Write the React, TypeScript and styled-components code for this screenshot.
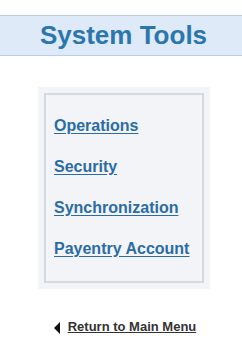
import React from "react";
import styled, { createGlobalStyle } from "styled-components";

const Global = createGlobalStyle`
  html, body { margin: 0; padding: 0; background: #ffffff; }
  body { font-family: "Liberation Sans", Arial, sans-serif; }
`;

const Page = styled.div`
  width: 242px;
  padding-top: 15px;
  display: flex;
  flex-direction: column;
  align-items: center;
`;

const Header = styled.h1`
  margin: 0;
  width: 100%;
  box-sizing: border-box;
  height: 41px;
  padding-left: 5px;
  border-top: 1px solid #b9cee5;
  border-bottom: 1px solid #b9cee5;
  background: #deeaf8;
  color: #2a76ad;
  font-size: 26px;
  font-weight: bold;
  line-height: 38px;
  text-align: center;
`;

const Panel = styled.div`
  margin-top: 31px;
  margin-left: 6px;
  width: 172px;
  box-sizing: border-box;
  padding: 6px;
  background: #f2f4f7;
`;

const Inner = styled.ul`
  list-style: none;
  margin: 0;
  box-sizing: border-box;
  border: 2px solid #d5d8dc;
  background: #f2f4f7;
  padding: 10px 0 12px 8px;
`;

const Item = styled.li`
  line-height: 41px;
  height: 41px;
`;

const MenuLink = styled.a`
  color: #2b6ca3;
  font-size: 16px;
  font-weight: bold;
  text-decoration: underline;
  text-underline-offset: 2px;
`;

const Back = styled.div`
  margin-top: 30px;
  margin-left: 8px;
  display: flex;
  align-items: center;
  gap: 8px;
  line-height: 16px;
`;

const Arrow = styled.span`
  width: 0;
  height: 0;
  border-top: 6px solid transparent;
  border-bottom: 6px solid transparent;
  border-right: 6px solid #111;
  margin-top: 1px;
`;

const BackLink = styled.a`
  color: #333;
  font-size: 13px;
  font-weight: bold;
  text-decoration: underline;
`;

const items = ["Operations", "Security", "Synchronization", "Payentry Account"];

export default function App() {
  return (
    <>
      <Global />
      <Page>
        <Header>System Tools</Header>
        <Panel>
          <Inner>
            {items.map((t) => (
              <Item key={t}>
                <MenuLink href="#">{t}</MenuLink>
              </Item>
            ))}
          </Inner>
        </Panel>
        <Back>
          <Arrow />
          <BackLink href="#">Return to Main Menu</BackLink>
        </Back>
      </Page>
    </>
  );
}
